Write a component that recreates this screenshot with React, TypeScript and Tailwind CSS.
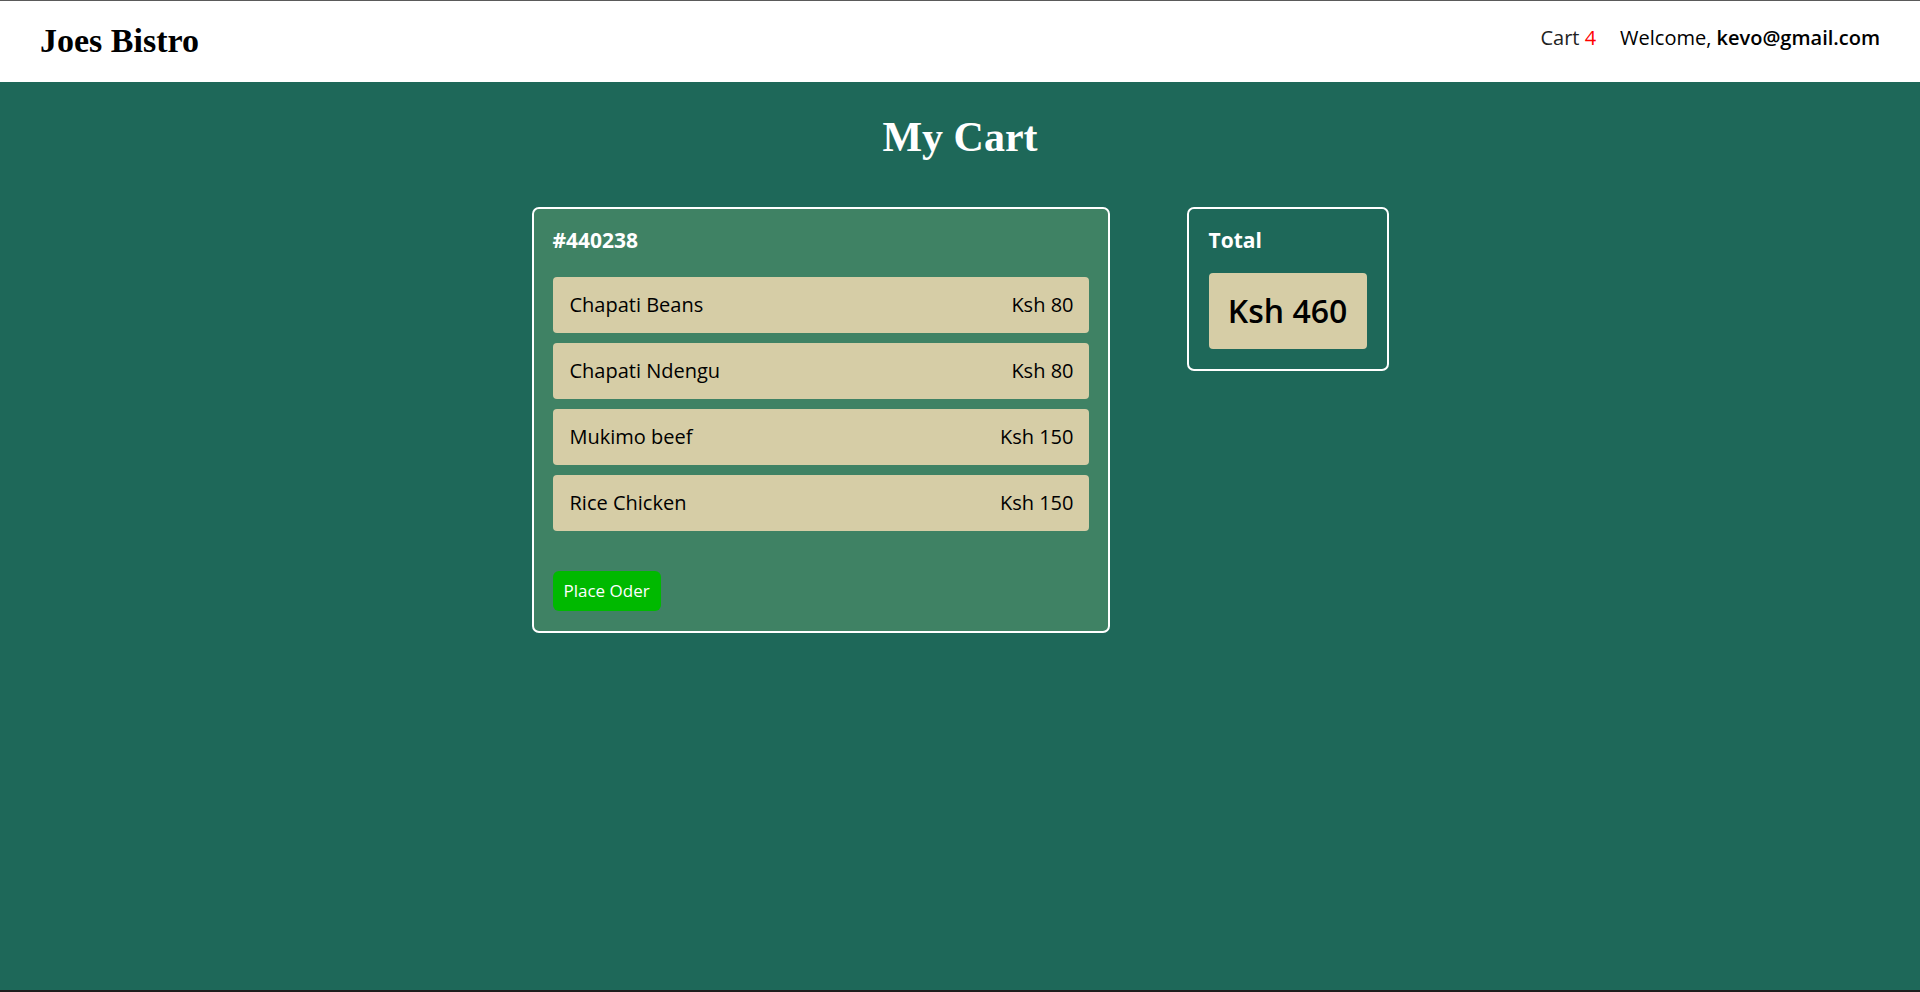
const ORDER_ID = '#440238';

const items = [
  { name: 'Chapati Beans', price: 80 },
  { name: 'Chapati Ndengu', price: 80 },
  { name: 'Mukimo beef', price: 150 },
  { name: 'Rice Chicken', price: 150 },
];

function Header() {
  return (
    <header className="flex h-[82px] items-start justify-between border-t border-[#5a5a5a] bg-white px-10 pt-[20px]">
      <h1 className="h-[40px] font-['Liberation_Serif',serif] text-[34px] font-bold leading-[40px] text-black">
        Joes Bistro
      </h1>
      <nav className="mt-[3px] flex text-[20px] leading-[28px]">
        <span className="text-[#222]">
          Cart <span className="text-[#ff0000]">4</span>
        </span>
        <span className="ml-[24px] text-black">
          Welcome, <span className="font-semibold">kevo@gmail.com</span>
        </span>
      </nav>
    </header>
  );
}

function CartItem({ name, price }: { name: string; price: number }) {
  return (
    <div className="flex h-[56px] items-center justify-between rounded-[4px] bg-[#d6cda6] pl-[17px] pr-[15px] text-[20px] text-black">
      <span>{name}</span>
      <span>Ksh {price}</span>
    </div>
  );
}

export default function App() {
  const total = items.reduce((sum, i) => sum + i.price, 0);

  return (
    <div className="min-h-[992px] font-['Open_Sans',sans-serif]">
      <Header />
      <main className="h-[910px] border-b-2 border-[#1e1e1e] bg-[#1e6859] pt-[31px]">
        <h2 className="h-[48px] text-center font-['Liberation_Serif',serif] text-[42px] font-bold leading-[48px] text-white">
          My Cart
        </h2>

        <div className="mt-[46px] flex items-start justify-center gap-[77px]">
          <section className="w-[578px] rounded-[7px] border-2 border-white bg-[#3f8264] px-[19px] pb-[20px] pt-[17px]">
            <h3 className="text-[21px] font-bold leading-[28px] text-white">{ORDER_ID}</h3>
            <div className="mt-[23px] flex flex-col gap-[10px]">
              {items.map((item) => (
                <CartItem key={item.name} name={item.name} price={item.price} />
              ))}
            </div>
            <button className="mt-[40px] h-[40px] rounded-[6px] bg-[#00b900] px-[11px] text-[17px] text-white">
              Place Oder
            </button>
          </section>

          <section className="w-[202px] rounded-[7px] border-2 border-white px-[20px] pb-[20px] pt-[17px]">
            <h3 className="text-[21px] font-bold leading-[28px] text-white">Total</h3>
            <div className="mt-[19px] flex h-[76px] w-[158px] items-center justify-center rounded-[4px] bg-[#d6cda6] text-[32px] font-semibold text-black">
              Ksh {total}
            </div>
          </section>
        </div>
      </main>
    </div>
  );
}
